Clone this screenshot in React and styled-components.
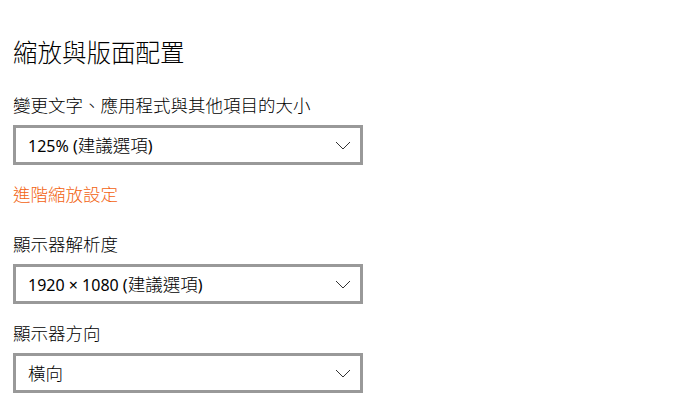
import React from "react";
import styled, { createGlobalStyle } from "styled-components";

const GlobalStyle = createGlobalStyle`
  html, body { margin: 0; padding: 0; background: #ffffff; }
  body {
    font-family: "Noto Sans", "Noto Sans CJK TC", "Noto Sans CJK SC", sans-serif;
    color: #000000;
  }
`;

const Page = styled.div`
  display: flex;
  flex-direction: column;
  align-items: flex-start;
  padding: 36px 0 0 13px;
  width: 350px;
`;

const Title = styled.h1`
  margin: 0;
  font-size: 24.5px;
  line-height: 34px;
  font-weight: 300;
  color: #000;
`;

const Label = styled.div`
  margin-top: ${(p) => p.$top}px;
  margin-bottom: 8px;
  font-size: 17.5px;
  line-height: 24px;
  font-weight: 300;
`;

const Select = styled.div`
  box-sizing: border-box;
  width: 350px;
  height: 40px;
  border: 3px solid #999999;
  background: #fff;
  display: flex;
  align-items: center;
  justify-content: space-between;
  padding: 0 9px 0 12px;
  line-height: 24px;
`;

const Value = styled.span`
  white-space: nowrap;
  font-size: 16px;
  font-weight: 400;
`;

const Han = styled.span`
  font-size: 17.5px;
  font-weight: 300;
`;

const Link = styled.a`
  margin-top: ${(p) => p.$top}px;
  font-size: 17.5px;
  line-height: 24px;
  font-weight: 300;
  color: #f26210;
  text-decoration: none;
  cursor: pointer;
`;

const Chevron = () => (
  <svg width="16" height="9" viewBox="0 0 16 9" aria-hidden="true">
    <polyline points="1,1 8,8 15,1" fill="none" stroke="#333" strokeWidth="1" />
  </svg>
);

const Dropdown = ({ children }) => (
  <Select>
    <Value>{children}</Value>
    <Chevron />
  </Select>
);

export default function App() {
  return (
    <>
      <GlobalStyle />
      <Page>
        <Title>縮放與版面配置</Title>
        <Label $top={23}>變更文字、應用程式與其他項目的大小</Label>
        <Dropdown>
          125% (<Han>建議選項</Han>)
        </Dropdown>
        <Link $top={17}>進階縮放設定</Link>
        <Label $top={26}>顯示器解析度</Label>
        <Dropdown>
          1920 × 1080 (<Han>建議選項</Han>)
        </Dropdown>
        <Label $top={17}>顯示器方向</Label>
        <Dropdown>
          <Han>橫向</Han>
        </Dropdown>
      </Page>
    </>
  );
}
